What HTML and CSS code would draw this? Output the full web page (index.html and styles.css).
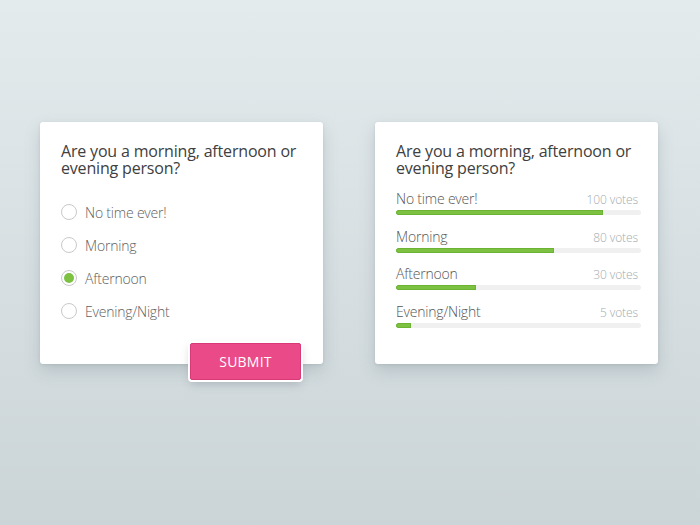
FILE: index.html
```html
<!DOCTYPE html>
<html>
<head>
<meta charset="utf-8">
<link rel="stylesheet" href="styles.css">
</head>
<body>
<div class="stage">
  <div class="card">
    <h2 class="title">Are you a morning, afternoon or evening person?</h2>
    <ul class="options">
      <li class="option"><span class="radio"></span>No time ever!</li>
      <li class="option"><span class="radio"></span>Morning</li>
      <li class="option"><span class="radio checked"></span>Afternoon</li>
      <li class="option"><span class="radio"></span>Evening/Night</li>
    </ul>
    <button class="submit">SUBMIT</button>
  </div>
  <div class="card results-card">
    <h2 class="title">Are you a morning, afternoon or evening person?</h2>
    <div class="results">
      <div class="result">
        <div class="row"><span class="label">No time ever!</span><span class="votes">100 votes</span></div>
        <div class="track"><div class="fill" style="width:84.5%"></div></div>
      </div>
      <div class="result">
        <div class="row"><span class="label">Morning</span><span class="votes">80 votes</span></div>
        <div class="track"><div class="fill" style="width:64.5%"></div></div>
      </div>
      <div class="result">
        <div class="row"><span class="label">Afternoon</span><span class="votes">30 votes</span></div>
        <div class="track"><div class="fill" style="width:32.5%"></div></div>
      </div>
      <div class="result">
        <div class="row"><span class="label">Evening/Night</span><span class="votes">5 votes</span></div>
        <div class="track"><div class="fill" style="width:6%"></div></div>
      </div>
    </div>
  </div>
</div>
</body>
</html>
```

FILE: styles.css
```css
html, body {
  margin: 0;
  padding: 0;
  height: 100%;
}
body {
  background: linear-gradient(180deg, #e4ebed 0%, #d7dfe2 50%, #cbd4d7 100%);
  font-family: "Open Sans", "Noto Sans", sans-serif;
  overflow: hidden;
}
.stage {
  display: flex;
  gap: 52px;
  padding: 122px 0 0 40px;
}
.card {
  position: relative;
  box-sizing: border-box;
  width: 283px;
  height: 242px;
  background: #fff;
  border-radius: 3px;
  padding: 21px 21px 0 21px;
  box-shadow: 0 7px 16px rgba(90, 110, 120, 0.22), 0 1px 3px rgba(90, 110, 120, 0.16);
}
.results-card {
  padding-right: 17px;
}
.title {
  margin: 0 -18px 0 0;
  font-size: 16px;
  line-height: 16.5px;
  font-weight: 400;
  color: #404040;
  letter-spacing: -0.18px;
}
.options {
  list-style: none;
  margin: 26px 0 0 0;
  padding: 0;
  display: flex;
  flex-direction: column;
  gap: 13px;
}
.option {
  display: flex;
  align-items: center;
  gap: 8px;
  height: 20px;
  font-size: 14px;
  font-weight: 300;
  color: #5e5e5e;
  letter-spacing: -0.2px;
}
.radio {
  box-sizing: border-box;
  width: 16px;
  height: 16px;
  border-radius: 50%;
  border: 1px solid #c9c9c9;
  background: #fff;
  position: relative;
}
.radio.checked::after {
  content: "";
  position: absolute;
  left: 2px;
  top: 2px;
  width: 10px;
  height: 10px;
  border-radius: 50%;
  background: #7cc142;
}
.submit {
  position: absolute;
  right: 22px;
  bottom: -16px;
  width: 111px;
  height: 37px;
  box-sizing: border-box;
  background: #ea4a87;
  border: 1px solid #d73a77;
  border-radius: 2px;
  box-shadow: 0 0 0 2px #fff, 0 4px 10px rgba(80, 90, 100, 0.28);
  color: #fff;
  font-family: "Open Sans", "Noto Sans", sans-serif;
  font-size: 14px;
  font-weight: 400;
  letter-spacing: 0.2px;
  padding: 0;
}
.results {
  margin-top: 14px;
  display: flex;
  flex-direction: column;
  gap: 12.5px;
}
.result {
  display: flex;
  flex-direction: column;
  gap: 2px;
}
.row {
  display: flex;
  justify-content: space-between;
  align-items: baseline;
  height: 18px;
  line-height: 18px;
  padding-right: 3px;
}
.label {
  font-size: 14px;
  font-weight: 300;
  color: #555;
  letter-spacing: -0.2px;
}
.votes {
  font-size: 12px;
  font-weight: 300;
  color: #a3acb0;
  letter-spacing: -0.1px;
}
.track {
  height: 5px;
  border-radius: 3px;
  background: #f0f0f0;
  overflow: hidden;
}
.fill {
  height: 100%;
  background: #7cc142;
  border-radius: 3px 0 0 3px;
  box-shadow: inset 0 0 0 1px #6cb233;
}
```
